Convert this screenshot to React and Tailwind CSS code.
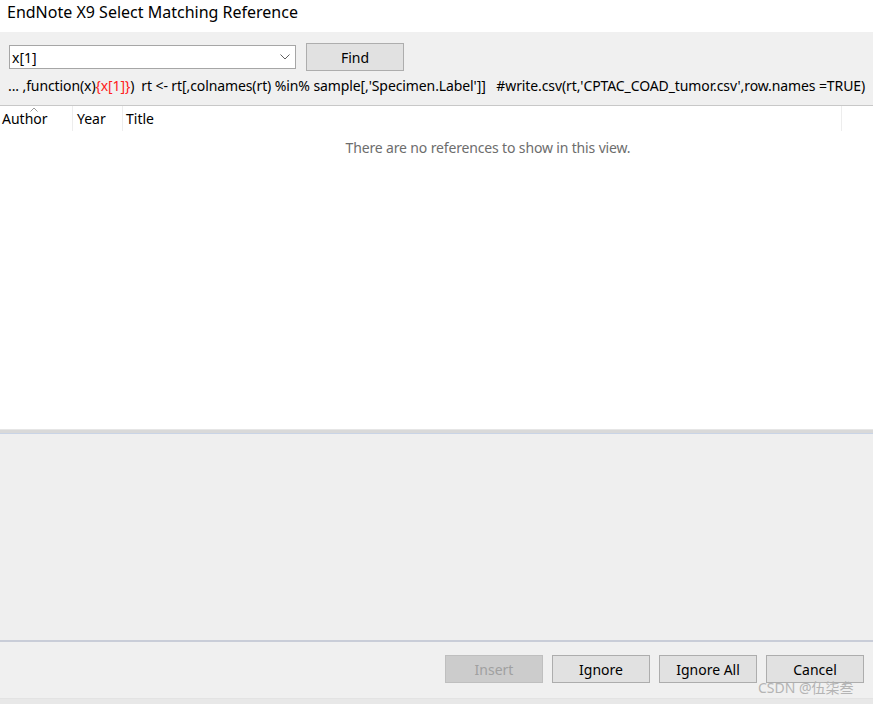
import React from 'react'

const font = { fontFamily: '"Noto Sans", "Noto Sans CJK SC", sans-serif' }

const Btn = ({ label, disabled }) => (
  <button
    className={
      disabled
        ? 'w-[98px] h-[28px] bg-[#cccccc] border border-[#bfbfbf] text-[#a0a0a0] text-[14px]'
        : 'w-[98px] h-[28px] bg-[#e1e1e1] border border-[#adadad] text-black text-[14px]'
    }
  >
    {label}
  </button>
)

const App = () => {
  return (
    <div className="w-[873px] h-[704px] flex flex-col bg-[#f0f0f0] overflow-hidden relative" style={font}>
      <div className="h-[32px] bg-white pl-[7px] pt-[1px] text-[16px] leading-[22px] text-black">
        EndNote X9 Select Matching Reference
      </div>

      <div className="h-[74px] flex flex-col border-b border-[#c8c8c8]">
        <div className="flex items-center pt-[11px] pl-[9px]">
          <div className="w-[287px] h-[24px] bg-white border border-[#a6a6a6] flex items-center justify-between pl-[2px] pr-[4px] text-[14px]">
            <span>x[1]</span>
            <svg width="10" height="6" viewBox="0 0 10 6" className="mr-[1px]">
              <path d="M0.5 0.5 L5 5 L9.5 0.5" fill="none" stroke="#606060" strokeWidth="1" />
            </svg>
          </div>
          <div className="ml-[10px] w-[98px] h-[28px] bg-[#e1e1e1] border border-[#adadad] flex items-center justify-center text-[14px]">
            Find
          </div>
        </div>
        <div className="pl-[8px] pt-[4px] text-[14px] text-black whitespace-nowrap tracking-[-0.1px]">
          ... ,function(x)<span className="text-[#ff2020]">{'{x[1]}'}</span>)&nbsp; rt &lt;- rt[,colnames(rt) %in% sample[,'Specimen.Label']]&nbsp;&nbsp; #write.csv(rt,'CPTAC_COAD_tumor.csv',row.names =TRUE)
        </div>
      </div>

      <div className="h-[323px] bg-white flex flex-col">
        <div className="h-[25px] flex text-[14px] text-black relative">
          <div className="w-[73px] pl-[2px] pt-[2px] border-r border-[#ededed] relative">
            Author
            <svg width="8" height="5" viewBox="0 0 8 5" className="absolute left-[30px] top-[1px]">
              <path d="M0.5 4.5 L4 1 L7.5 4.5" fill="none" stroke="#9a9a9a" strokeWidth="1" />
            </svg>
          </div>
          <div className="w-[50px] pl-[4px] pt-[2px] border-r border-[#ededed]">Year</div>
          <div className="w-[719px] pl-[3px] pt-[2px] border-r border-[#ededed]">Title</div>
        </div>
        <div className="text-center text-[14px] text-[#6d6d6d] pt-[6px] pl-[103px] tracking-[-0.15px]">
          There are no references to show in this view.
        </div>
      </div>

      <div className="h-[5px] bg-[#d9d9d9] border-t border-[#e6e6e6] border-b border-b-[#c9d4e6]" />

      <div className="h-[208px] bg-[#efefef] border-b-2 border-[#c9cdd8]" />

      <div className="flex-1 flex flex-col">
        <div className="flex justify-end gap-[9px] pr-[9px] pt-[13px]">
          <Btn label="Insert" disabled />
          <Btn label="Ignore" />
          <Btn label="Ignore All" />
          <Btn label="Cancel" />
        </div>
      </div>
      <div className="h-[6px] bg-[#e8e8e8] border-t border-[#e3e3e3]" />

      <div className="absolute left-[758px] top-[679px] text-[14px] leading-[17px] text-[#b4b4b4]">
        CSDN @伍柒叁
      </div>
    </div>
  )
}

export default App
